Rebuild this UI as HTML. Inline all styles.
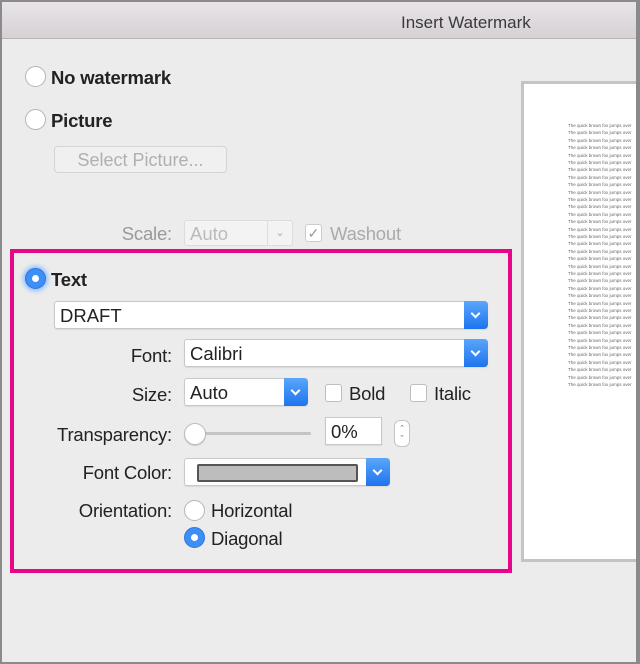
<!DOCTYPE html>
<html><head><meta charset="utf-8"><style>
*{margin:0;padding:0;box-sizing:border-box}
body{width:640px;height:664px;background:#fff;font-family:"Liberation Sans",sans-serif;position:relative;overflow:hidden}
.win{position:absolute;left:0;top:0;width:640px;height:664px;border:2px solid #8a8a8a;background:#ececec}
.tb{position:absolute;left:0;top:0;width:636px;height:37px;background:linear-gradient(#e9e4e8,#d6d1d5);border-bottom:1px solid #b8b4b7}
.tb span{position:absolute;left:399px;top:11px;font-size:17px;color:#3a3a3a}
.a{position:absolute}
.lbl{position:absolute;font-size:18.5px;color:#222;text-align:right;width:160px;letter-spacing:-0.2px}
.rad{position:absolute;width:21px;height:21px;border-radius:50%;background:#fff;border:1px solid #b5b5b5}
.radon{position:absolute;width:21px;height:21px;border-radius:50%;background:#3d8ef5;border:1px solid #2c78e0}
.radon:after{content:"";position:absolute;left:6px;top:6px;width:7px;height:7px;border-radius:50%;background:#fff}
.fld{position:absolute;background:#fff;border:1px solid #c8c8c8;border-radius:3px;font-size:18.5px;color:#222;padding:3px 0 0 5px;box-shadow:0 1px 1px rgba(0,0,0,.08)}
.blu{position:absolute;top:-1px;right:-1px;bottom:-1px;width:24px;background:linear-gradient(#5aa6fb,#1e74ee);border-radius:0 4px 4px 0}
.blu:after{content:"";position:absolute;left:8px;top:9px;width:5px;height:5px;border-right:2px solid #fff;border-bottom:2px solid #fff;transform:rotate(45deg)}
.cb{position:absolute;width:17px;height:18px;background:#fff;border:1px solid #bdbdbd;border-radius:3px}
.t{position:absolute;font-size:18.5px;color:#222;letter-spacing:-0.2px}
.pv{position:absolute;left:521px;top:81px;width:120px;height:481px;border:3px solid #c4c4c4;background:#fff}
.ln{position:absolute;left:44px;font-size:4.5px;color:#666;white-space:nowrap;line-height:4px}
</style></head><body>
<div class="win">
<div class="tb"><span>Insert Watermark</span></div>
</div>
<div class="rad" style="left:25px;top:66px"></div>
<div class="t" style="left:51px;top:67px;font-weight:bold">No watermark</div>
<div class="rad" style="left:25px;top:109px"></div>
<div class="t" style="left:51px;top:110px;font-weight:bold">Picture</div>
<div class="a" style="left:54px;top:146px;width:173px;height:27px;border:1px solid #d4d4d4;border-radius:4px;background:#f0f0f0;color:#b0b0b0;font-size:18px;text-align:center;padding-top:3px">Select Picture...</div>
<div class="lbl" style="left:12px;top:223px;color:#999">Scale:</div>
<div class="a" style="left:184px;top:220px;width:109px;height:26px;border:1px solid #dcdcdc;border-radius:3px;background:#f3f3f3;color:#bbb;font-size:18.5px;padding:2px 0 0 5px">Auto<div style="position:absolute;right:0;top:0;bottom:0;width:25px;border-left:1px solid #ddd;color:#aaa;font-size:11px;text-align:center;padding-top:5px">&#8964;</div></div>
<div class="cb" style="left:305px;top:224px;border-color:#ccc;color:#999;font-size:14px;text-align:center;line-height:17px">&#10003;</div>
<div class="t" style="left:330px;top:223px;color:#aaa">Washout</div>

<div class="a" style="left:10px;top:249px;width:502px;height:324px;border:4px solid #e8058a"></div>
<div class="radon" style="left:25px;top:268px;box-shadow:0 0 5px 2px #8dbdfb"></div>
<div class="t" style="left:51px;top:269px;font-weight:bold">Text</div>
<div class="fld" style="left:54px;top:301px;width:434px;height:28px">DRAFT<div class="blu"></div></div>
<div class="lbl" style="left:12px;top:345px">Font:</div>
<div class="fld" style="left:184px;top:339px;width:304px;height:28px">Calibri<div class="blu"></div></div>
<div class="lbl" style="left:12px;top:384px">Size:</div>
<div class="fld" style="left:184px;top:378px;width:124px;height:28px">Auto<div class="blu"></div></div>
<div class="cb" style="left:325px;top:384px"></div>
<div class="t" style="left:349px;top:383px">Bold</div>
<div class="cb" style="left:410px;top:384px"></div>
<div class="t" style="left:434px;top:383px">Italic</div>
<div class="lbl" style="left:12px;top:424px">Transparency:</div>
<div class="a" style="left:195px;top:432px;width:116px;height:3px;background:#c4c4c4;border-radius:2px"></div>
<div class="a" style="left:184px;top:423px;width:22px;height:22px;border-radius:50%;background:#fff;border:1px solid #bbb;box-shadow:0 1px 1px rgba(0,0,0,.15)"></div>
<div class="fld" style="left:325px;top:417px;width:57px;height:28px;border-radius:0">0%</div>
<div class="a" style="left:394px;top:420px;width:16px;height:27px;border:1px solid #c4c4c4;border-radius:6px;background:#fff;font-size:9px;line-height:10px;text-align:center;color:#555;padding-top:3px">&#710;<br>&#711;</div>
<div class="lbl" style="left:12px;top:462px">Font Color:</div>
<div class="fld" style="left:184px;top:458px;width:206px;height:28px"><div class="a" style="left:12px;top:5px;width:161px;height:18px;border:2px solid #555;background:#bdbdbd;border-radius:2px"></div><div class="blu"></div></div>
<div class="lbl" style="left:12px;top:500px">Orientation:</div>
<div class="rad" style="left:184px;top:500px"></div>
<div class="t" style="left:211px;top:500px">Horizontal</div>
<div class="radon" style="left:184px;top:527px"></div>
<div class="t" style="left:211px;top:528px">Diagonal</div>

<div class="pv">
<div id="ls"></div>
</div>
<div class="a" style="left:636px;top:0;width:4px;height:664px;background:#8a8a8a"></div>
<script>
var s='';for(var i=0;i<36;i++){s+='<div class="ln" style="top:'+(40+i*7.4)+'px">The quick brown fox jumps over</div>';}
document.getElementById('ls').innerHTML=s;
</script>
</body></html>
